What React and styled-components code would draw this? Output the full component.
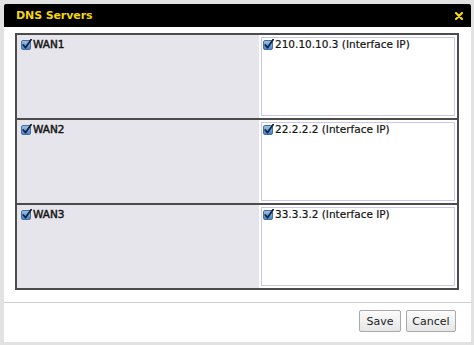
import React from "react";
import styled, { createGlobalStyle } from "styled-components";

const GlobalStyle = createGlobalStyle`
  html, body { margin: 0; padding: 0; background: #ffffff; }
  body { font-family: "DejaVu Sans", Verdana, sans-serif; }
  * { box-sizing: border-box; }
`;

const Screen = styled.div`
  width: 474px;
  height: 345px;
  padding: 4px 3px 3px 4px;
  background: #e2e2e2;
  display: flex;
`;

const Dialog = styled.div`
  flex: 1;
  display: flex;
  flex-direction: column;
  background: #ffffff;
`;

const Header = styled.div`
  height: 23px;
  background: #000000;
  border-radius: 2px 2px 0 0;
  display: flex;
  align-items: center;
  justify-content: space-between;
  padding: 0 8px 0 12px;
`;

const Title = styled.div`
  color: #f4d60c;
  font-weight: bold;
  font-size: 11px;
  letter-spacing: -0.1px;
`;

const Body = styled.div`
  flex: 1;
  padding: 6px 12px 0 11px;
`;

const Table = styled.div`
  border: 2px solid #4c4c4c;
  display: flex;
  flex-direction: column;
`;

const Row = styled.div`
  display: grid;
  grid-template-columns: 242px 1fr;
  height: 83px;
  & + & {
    border-top: 2px solid #4c4c4c;
    height: 85px;
  }
`;

const LabelCell = styled.div`
  background: #e5e5eb;
  padding: 3px 4px;
`;

const ValueCell = styled.div`
  background: #ffffff;
  padding: 2px;
  display: flex;
`;

const ValueBox = styled.div`
  flex: 1;
  border: 1px solid #c9c7ea;
  padding: 0 1px;
`;

const Check = styled.label`
  display: flex;
  align-items: center;
  gap: 1px;
  font-size: 10.5px;
  line-height: 13px;
  color: #151515;
  -webkit-text-stroke: ${(p) => (p.$heavy ? "0.45px" : "0.2px")} #151515;
`;

const Footer = styled.div`
  height: 40px;
  border-top: 1px solid #cdcdcd;
  display: flex;
  justify-content: flex-end;
  align-items: flex-start;
  gap: 5px;
  padding: 7px 15px 0 0;
`;

const Button = styled.button`
  height: 22px;
  width: ${(p) => p.$w}px;
  padding: 0;
  font-family: "DejaVu Sans", Verdana, sans-serif;
  font-size: 11px;
  color: #222;
  background: linear-gradient(#fbfbfb, #e6e6e6);
  border: 1px solid #a9a9a9;
  border-radius: 2px;
`;

const CheckIcon = () => (
  <svg width="11" height="11" viewBox="0 0 11 11">
    <defs>
      <linearGradient id="cbg" x1="0" y1="0" x2="0" y2="1">
        <stop offset="0" stopColor="#9cc4ea" />
        <stop offset="1" stopColor="#3d83cf" />
      </linearGradient>
    </defs>
    <rect x="0.5" y="1.5" width="9" height="9" rx="1.5" fill="url(#cbg)" stroke="#4c6e96" />
    <path d="M2.3 6 L4.6 8.6 L10.2 0.6" fill="none" stroke="#13233f" strokeWidth="1.8" strokeLinecap="round" strokeLinejoin="round" />
  </svg>
);

const CloseIcon = () => (
  <svg width="8" height="8" viewBox="0 0 8 8">
    <path d="M1 1 L7 7 M7 1 L1 7" stroke="#f4d60c" strokeWidth="2.2" strokeLinecap="round" />
  </svg>
);

const rows = [
  { wan: "WAN1", ip: "210.10.10.3 (Interface IP)" },
  { wan: "WAN2", ip: "22.2.2.2 (Interface IP)" },
  { wan: "WAN3", ip: "33.3.3.2 (Interface IP)" },
];

export default function App() {
  return (
    <>
      <GlobalStyle />
      <Screen>
        <Dialog>
          <Header>
            <Title>DNS Servers</Title>
            <CloseIcon />
          </Header>
          <Body>
            <Table>
              {rows.map((r) => (
                <Row key={r.wan}>
                  <LabelCell>
                    <Check $heavy>
                      <CheckIcon />
                      {r.wan}
                    </Check>
                  </LabelCell>
                  <ValueCell>
                    <ValueBox>
                      <Check>
                        <CheckIcon />
                        {r.ip}
                      </Check>
                    </ValueBox>
                  </ValueCell>
                </Row>
              ))}
            </Table>
          </Body>
          <Footer>
            <Button $w={42}>Save</Button>
            <Button $w={50}>Cancel</Button>
          </Footer>
        </Dialog>
      </Screen>
    </>
  );
}
